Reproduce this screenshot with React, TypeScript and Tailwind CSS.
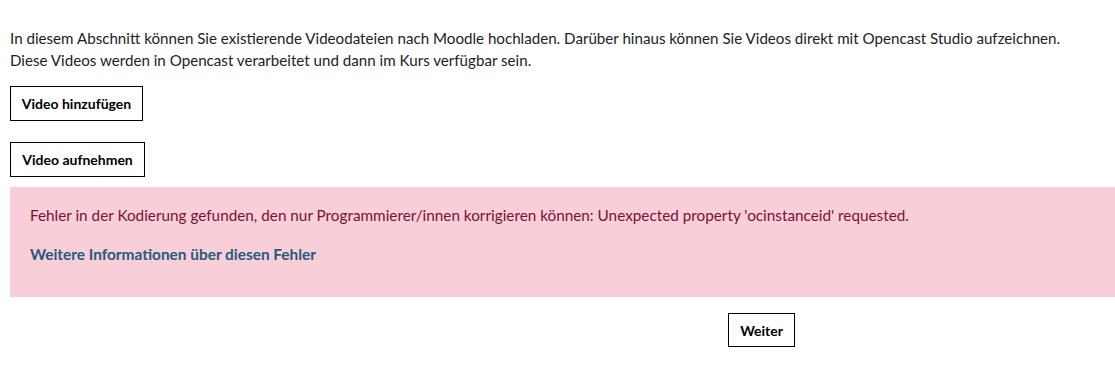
import React from "react";

export default function App() {
  return (
    <div
      className="w-[1115px] h-[375px] bg-white overflow-hidden text-[#1d2125]"
      style={{ fontFamily: "Lato, 'Liberation Sans', sans-serif" }}
    >
      <div className="pl-[10px] pt-[27px]">
        <p className="text-[15.15px] leading-[22px] m-0">
          In diesem Abschnitt können Sie existierende Videodateien nach Moodle hochladen. Darüber hinaus können Sie Videos direkt mit Opencast Studio aufzeichnen.
          <br />
          Diese Videos werden in Opencast verarbeitet und dann im Kurs verfügbar sein.
        </p>
        <div className="mt-[15px] flex flex-col items-start gap-[21px]">
          <button className="h-[35px] w-[133px] border border-black bg-white text-[14px] font-bold text-black">
            Video hinzufügen
          </button>
          <button className="h-[35px] w-[135px] border border-black bg-white text-[14px] font-bold text-black">
            Video aufnehmen
          </button>
        </div>
        <div className="mt-[10px] h-[110px] bg-[#f8cfd9] pl-[20px] pt-[17px]">
          <p className="text-[15.3px] leading-[22px] text-[#771232] m-0">
            Fehler in der Kodierung gefunden, den nur Programmierer/innen korrigieren können: Unexpected property 'ocinstanceid' requested.
          </p>
          <p className="mt-[17px] text-[15.4px] leading-[22px] font-bold text-[#285a7d] m-0">
            Weitere Informationen über diesen Fehler
          </p>
        </div>
        <div className="mt-[16px] pl-[718px]">
          <button className="h-[34px] w-[67px] border border-black bg-white text-[14px] font-bold text-black">
            Weiter
          </button>
        </div>
      </div>
    </div>
  );
}
